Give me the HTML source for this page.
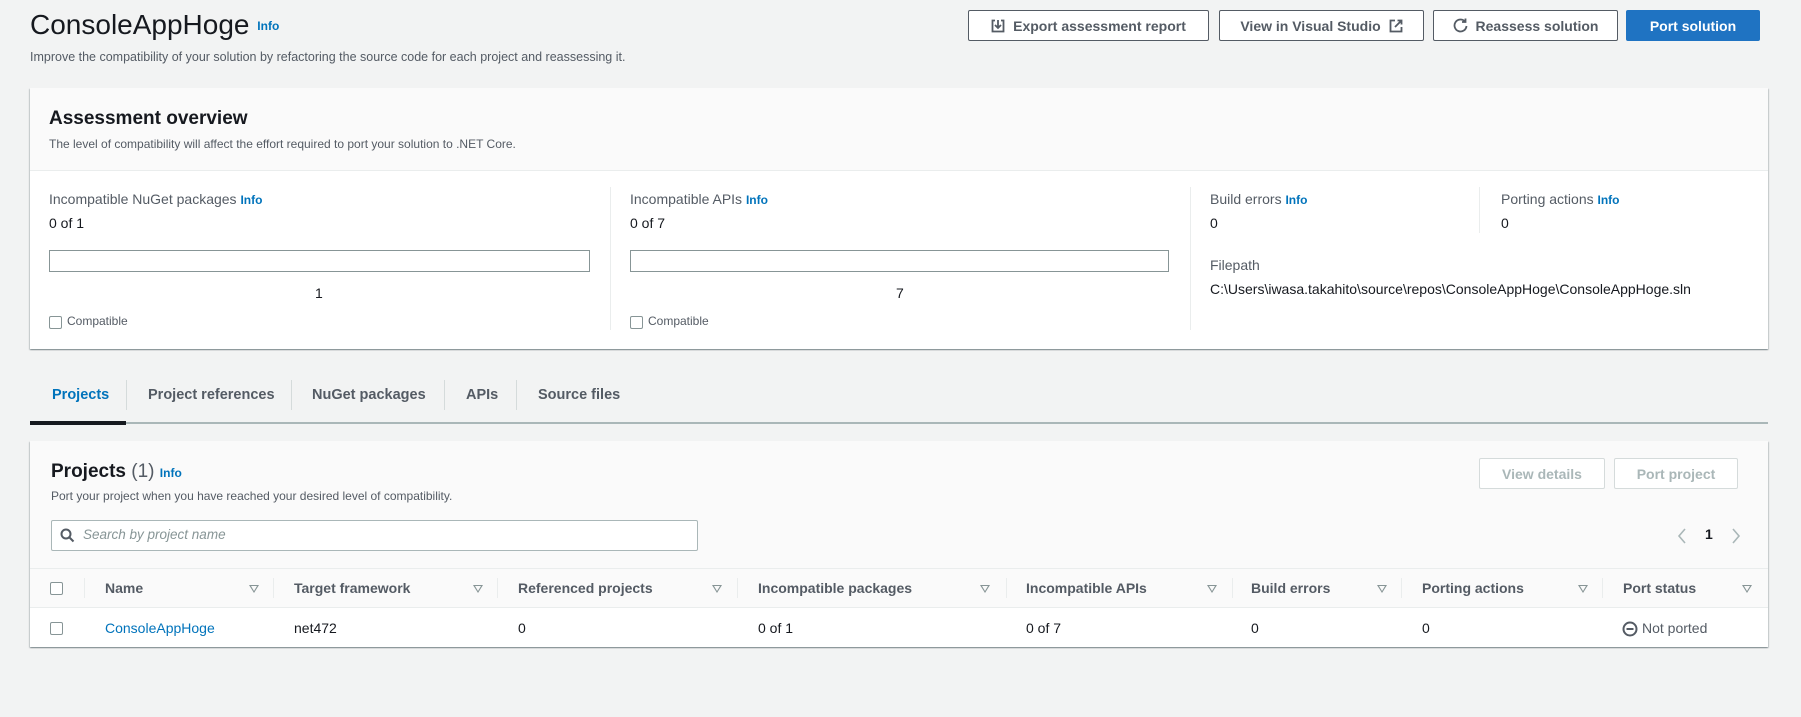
<!DOCTYPE html>
<html><head><meta charset="utf-8"><style>
*{box-sizing:border-box;margin:0;padding:0}
body{width:1801px;height:717px;background:#f2f3f3;font-family:"Liberation Sans",sans-serif;color:#16191f;position:relative;overflow:hidden;font-size:14px}
.a{position:absolute;white-space:nowrap}
.info{color:#0073bb;font-weight:bold;font-size:12px}
.btn{position:absolute;height:31px;border:1px solid #545b64;background:#fff;border-radius:2px;font-weight:bold;font-size:14px;color:#545b64;display:flex;align-items:center;justify-content:center;gap:8px}
.card{position:absolute;background:#fff;box-shadow:0 1px 1px 0 rgba(0,28,36,.3),1px 1px 1px 0 rgba(0,28,36,.15),-1px 1px 1px 0 rgba(0,28,36,.15)}
.g{color:#545b64}
.vd{position:absolute;width:1px;background:#eaeded}
.bar{position:absolute;height:22px;border:1px solid #879596;background:#fff}
.cb{position:absolute;width:13px;height:13px;border:1px solid #879596;border-radius:2px;background:#fff}
.th{position:absolute;top:580px;font-weight:bold;font-size:14px;color:#545b64}
.tri{position:absolute;top:585px;width:0;height:0;border-left:5px solid transparent;border-right:5px solid transparent;border-top:8px solid #879596}
.tri:after{content:"";position:absolute;left:-3px;top:-7px;border-left:3px solid transparent;border-right:3px solid transparent;border-top:5px solid #fafafa}
.hd{position:absolute;top:578px;width:1px;height:20px;background:#eaeded}
.td{position:absolute;top:620px;font-size:14px}
</style></head><body>
<div class="a" style="left:30px;top:9px;font-size:28px;color:#16191f">ConsoleAppHoge <span class="info" style="vertical-align:4px">Info</span></div>
<div class="a g" style="left:30px;top:50px;font-size:12.5px">Improve the compatibility of your solution by refactoring the source code for each project and reassessing it.</div>

<div class="btn" style="left:968px;top:10px;width:241px"><svg width="14" height="14" viewBox="0 0 14 14"><path d="M1.5 3v9.5h11V3M4 1.5h-2.5v2M10 1.5h2.5v2M7 1v8M4 6l3 3 3-3" fill="none" stroke="#545b64" stroke-width="1.8"/></svg>Export assessment report</div>
<div class="btn" style="left:1219px;top:10px;width:205px">View in Visual Studio<svg width="14" height="14" viewBox="0 0 14 14"><path d="M6 1.5H1.5v11h11V8M8.5 1.5h4v4M12.5 1.5 6 8" fill="none" stroke="#545b64" stroke-width="1.8"/></svg></div>
<div class="btn" style="left:1433px;top:10px;width:185px"><svg width="15" height="15" viewBox="0 0 15 15"><path d="M12 3.5A6 6 0 1 0 13.5 8M12.5 0.5v3.5H9" fill="none" stroke="#545b64" stroke-width="1.8"/></svg>Reassess solution</div>
<div class="btn" style="left:1626px;top:10px;width:134px;background:#1f73c2;border-color:#1f73c2;color:#fff">Port solution</div>

<div class="card" style="left:30px;top:88px;width:1738px;height:261px">
<div style="position:absolute;left:0;top:0;right:0;height:83px;background:#fafafa;border-bottom:1px solid #eaeded"></div>
</div>
<div class="a" style="left:49px;top:108px;font-size:19px;font-weight:bold">Assessment overview</div>
<div class="a g" style="left:49px;top:137px;font-size:12px">The level of compatibility will affect the effort required to port your solution to .NET Core.</div>
<div class="vd" style="left:610px;top:187px;height:143px"></div>
<div class="vd" style="left:1190px;top:187px;height:143px"></div>
<div class="vd" style="left:1479px;top:187px;height:46px"></div>
<div class="a g" style="left:49px;top:191px;font-size:14px">Incompatible NuGet packages <span class="info">Info</span></div>
<div class="a" style="left:49px;top:215px;font-size:14px">0 of 1</div>
<div class="bar" style="left:49px;top:250px;width:541px"></div>
<div class="a" style="left:315px;top:285px">1</div>
<div class="cb" style="left:49px;top:316px"></div><div class="a g" style="left:67px;top:314px;font-size:12px">Compatible</div>
<div class="a g" style="left:630px;top:191px;font-size:14px">Incompatible APIs <span class="info">Info</span></div>
<div class="a" style="left:630px;top:215px">0 of 7</div>
<div class="bar" style="left:630px;top:250px;width:539px"></div>
<div class="a" style="left:896px;top:285px">7</div>
<div class="cb" style="left:630px;top:316px"></div><div class="a g" style="left:648px;top:314px;font-size:12px">Compatible</div>
<div class="a g" style="left:1210px;top:191px">Build errors <span class="info">Info</span></div>
<div class="a" style="left:1210px;top:215px">0</div>
<div class="a g" style="left:1501px;top:191px">Porting actions <span class="info">Info</span></div>
<div class="a" style="left:1501px;top:215px">0</div>
<div class="a g" style="left:1210px;top:257px">Filepath</div>
<div class="a" style="left:1210px;top:281px">C:\Users\iwasa.takahito\source\repos\ConsoleAppHoge\ConsoleAppHoge.sln</div>

<div style="position:absolute;left:30px;top:422px;width:1738px;height:2px;background:#aab7b8"></div>
<div style="position:absolute;left:30px;top:421px;width:96px;height:4px;background:#16191f"></div>
<div class="a" style="left:52px;top:387px;font-weight:bold;font-size:14.5px;color:#0073bb">Projects</div>
<div class="vd" style="left:126px;top:380px;height:30px;background:#d5dbdb"></div>
<div class="a" style="left:148px;top:387px;font-weight:bold;font-size:14.5px;color:#545b64">Project references</div>
<div class="vd" style="left:291px;top:380px;height:30px;background:#d5dbdb"></div>
<div class="a" style="left:312px;top:387px;font-weight:bold;font-size:14.5px;color:#545b64">NuGet packages</div>
<div class="vd" style="left:444px;top:380px;height:30px;background:#d5dbdb"></div>
<div class="a" style="left:466px;top:387px;font-weight:bold;font-size:14.5px;color:#545b64">APIs</div>
<div class="vd" style="left:516px;top:380px;height:30px;background:#d5dbdb"></div>
<div class="a" style="left:538px;top:387px;font-weight:bold;font-size:14.5px;color:#545b64">Source files</div>

<div class="card" style="left:30px;top:441px;width:1738px;height:206px">
<div style="position:absolute;left:0;top:0;right:0;height:167px;background:#fafafa;border-bottom:1px solid #eaeded"></div>
<div style="position:absolute;left:0;top:127px;right:0;height:1px;background:#eaeded"></div>
</div>
<div class="a" style="left:51px;top:461px;font-size:19px;font-weight:bold">Projects <span style="font-weight:normal;color:#545b64">(1)</span> <span class="info">Info</span></div>
<div class="a g" style="left:51px;top:489px;font-size:12px">Port your project when you have reached your desired level of compatibility.</div>
<div class="btn" style="left:1479px;top:458px;width:126px;border-color:#d5dbdb;color:#aab7b8">View details</div>
<div class="btn" style="left:1614px;top:458px;width:124px;border-color:#d5dbdb;color:#aab7b8">Port project</div>
<div style="position:absolute;left:51px;top:520px;width:647px;height:31px;border:1px solid #aab7b8;border-radius:2px;background:#fff"></div>
<svg class="a" style="left:60px;top:528px" width="15" height="15" viewBox="0 0 15 15"><circle cx="6" cy="6" r="4.5" fill="none" stroke="#545b64" stroke-width="2"/><path d="M9.5 9.5 13.5 13.5" stroke="#545b64" stroke-width="2"/></svg>
<div class="a" style="left:83px;top:527px;font-style:italic;color:#879596;font-size:13.5px">Search by project name</div>
<svg class="a" style="left:1676px;top:527px" width="12" height="18" viewBox="0 0 12 18"><path d="M9 2 3 9l6 7" fill="none" stroke="#aab7b8" stroke-width="1.6"/></svg>
<div class="a" style="left:1705px;top:526px;font-weight:bold">1</div>
<svg class="a" style="left:1730px;top:527px" width="12" height="18" viewBox="0 0 12 18"><path d="M3 2l6 7-6 7" fill="none" stroke="#aab7b8" stroke-width="1.6"/></svg>

<div class="cb" style="left:50px;top:582px"></div>
<div class="hd" style="left:84px"></div><div class="hd" style="left:273px"></div><div class="hd" style="left:497px"></div><div class="hd" style="left:737px"></div><div class="hd" style="left:1006px"></div><div class="hd" style="left:1232px"></div><div class="hd" style="left:1401px"></div><div class="hd" style="left:1602px"></div>
<div class="th" style="left:105px">Name</div>
<div class="th" style="left:294px">Target framework</div>
<div class="th" style="left:518px">Referenced projects</div>
<div class="th" style="left:758px">Incompatible packages</div>
<div class="th" style="left:1026px">Incompatible APIs</div>
<div class="th" style="left:1251px">Build errors</div>
<div class="th" style="left:1422px">Porting actions</div>
<div class="th" style="left:1623px">Port status</div>
<div class="tri" style="left:249px"></div><div class="tri" style="left:473px"></div><div class="tri" style="left:712px"></div><div class="tri" style="left:980px"></div><div class="tri" style="left:1207px"></div><div class="tri" style="left:1377px"></div><div class="tri" style="left:1578px"></div><div class="tri" style="left:1742px"></div>

<div class="cb" style="left:50px;top:622px"></div>
<div class="td" style="left:105px;color:#0073bb">ConsoleAppHoge</div>
<div class="td" style="left:294px">net472</div>
<div class="td" style="left:518px">0</div>
<div class="td" style="left:758px">0 of 1</div>
<div class="td" style="left:1026px">0 of 7</div>
<div class="td" style="left:1251px">0</div>
<div class="td" style="left:1422px">0</div>
<svg class="a" style="left:1622px;top:621px" width="16" height="16" viewBox="0 0 16 16"><circle cx="8" cy="8" r="6.5" fill="none" stroke="#545b64" stroke-width="2"/><path d="M4.5 8h7" stroke="#545b64" stroke-width="2"/></svg>
<div class="td" style="left:1642px;color:#545b64">Not ported</div>
</body></html>
